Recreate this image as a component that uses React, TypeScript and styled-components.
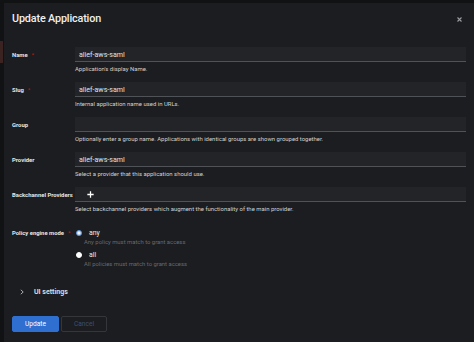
import React from "react";
import styled, { createGlobalStyle } from "styled-components";

const Global = createGlobalStyle`
  html, body { margin: 0; padding: 0; background: #101113; }
  body { font-family: Roboto, "Open Sans", "Noto Sans", sans-serif; -webkit-font-smoothing: antialiased; }
  * { box-sizing: border-box; }
`;

const Page = styled.div`
  width: 474px;
  height: 342px;
  display: flex;
  padding-top: 3px;
  overflow: hidden;
  background: #111214;
`;

const SideStrip = styled.div`
  width: 4px;
  flex: none;
  display: flex;
  flex-direction: column;
  padding-top: 38px;
`;

const NavAccent = styled.div`
  width: 3px;
  height: 22px;
  background: #3a2320;
`;

const Modal = styled.div`
  flex: 1;
  background: #1b1d21;
  padding: 9px 8px 0 8px;
  display: flex;
  flex-direction: column;
`;

const Header = styled.div`
  display: flex;
  align-items: center;
  justify-content: space-between;
  height: 14px;
  margin-bottom: 21px;
`;

const Title = styled.h1`
  margin: 0;
  font-size: 10.8px;
  line-height: 14px;
  font-weight: 500;
  color: #f0f0f0;
  letter-spacing: -0.15px;
`;

const Close = styled.button`
  border: none;
  background: none;
  padding: 0;
  margin-right: 3px;
  width: 8px;
  height: 8px;
  display: flex;
  align-items: center;
  justify-content: center;
`;

const Form = styled.div`
  display: flex;
  flex-direction: column;
  gap: 9px;
`;

const Row = styled.div<{ $padTop?: number }>`
  display: grid;
  grid-template-columns: 63px 1fr;
  align-items: start;
  padding-top: ${(p) => p.$padTop ?? 0}px;
`;

const Label = styled.div<{ $h?: number }>`
  height: ${(p) => p.$h ?? 15}px;
  display: flex;
  align-items: center;
  font-size: 5.9px;
  font-weight: 700;
  color: #e6e6e6;
  white-space: nowrap;
`;

const Req = styled.span`
  color: #c9190b;
  margin-left: 4px;
  font-weight: 400;
`;

const Field = styled.div`
  display: flex;
  flex-direction: column;
`;

const Input = styled.div`
  height: 15px;
  background: #222428;
  border-bottom: 1px solid #4f5257;
  display: flex;
  align-items: center;
  padding-left: 4px;
  font-size: 7.1px;
  color: #e2e2e2;
`;

const Helper = styled.div`
  margin-top: 2px;
  height: 9px;
  line-height: 9px;
  font-size: 5.95px;
  color: #d2d2d2;
  white-space: nowrap;
`;

const PlusBtn = styled.span`
  display: flex;
  align-items: center;
  margin-left: 8px;
`;

const Radios = styled.div`
  display: flex;
  flex-direction: column;
  gap: 3px;
  padding-left: 1px;
`;

const RadioLine = styled.div`
  height: 10px;
  display: flex;
  align-items: center;
  gap: 7px;
  font-size: 6.9px;
  color: #ededed;
`;

const RadioDot = styled.span<{ $on?: boolean }>`
  width: 6px;
  height: 6px;
  border-radius: 50%;
  background: #ffffff;
  border: ${(p) => (p.$on ? "1.6px solid #5c93d8" : "1px solid #ffffff")};
  box-shadow: ${(p) => (p.$on ? "inset 0 0 0 1px #c8d8ef" : "none")};
  flex: none;
`;

const RadioHelp = styled.div`
  padding-left: 8px;
  height: 9px;
  line-height: 9px;
  font-size: 5.9px;
  color: #666a6f;
  white-space: nowrap;
`;

const Expand = styled.div`
  margin-top: 18px;
  padding-left: 8px;
  display: flex;
  align-items: center;
  gap: 10px;
  height: 10px;
  font-size: 7px;
  font-weight: 600;
  color: #e3e3e3;
`;

const Actions = styled.div`
  margin-top: 19px;
  display: flex;
  gap: 2px;
`;

const Btn = styled.button<{ $primary?: boolean }>`
  height: 16px;
  padding: 0;
  width: ${(p) => (p.$primary ? 47 : 46)}px;
  border-radius: 2px;
  font-family: inherit;
  font-size: 6.6px;
  border: 1px solid ${(p) => (p.$primary ? "#2f6fd0" : "#33363b")};
  background: ${(p) => (p.$primary ? "#2f6fd0" : "transparent")};
  color: ${(p) => (p.$primary ? "#ffffff" : "#41506a")};
`;

const fields = [
  { label: "Name", req: true, value: "alief-aws-saml", help: "Application's display Name." },
  { label: "Slug", req: true, value: "alief-aws-saml", help: "Internal application name used in URLs." },
  {
    label: "Group",
    req: false,
    value: "",
    help: "Optionally enter a group name. Applications with identical groups are shown grouped together.",
  },
  { label: "Provider", req: false, value: "alief-aws-saml", help: "Select a provider that this application should use." },
];

export default function App() {
  return (
    <>
      <Global />
      <Page>
        <SideStrip>
          <NavAccent />
        </SideStrip>
        <Modal>
          <Header>
            <Title>Update Application</Title>
            <Close aria-label="Close">
              <svg width="5" height="5" viewBox="0 0 10 10">
                <path d="M1 1 L9 9 M9 1 L1 9" stroke="#9a9ca0" strokeWidth="2.2" />
              </svg>
            </Close>
          </Header>
          <Form>
            {fields.map((f) => (
              <Row key={f.label}>
                <Label>
                  {f.label}
                  {f.req && <Req>*</Req>}
                </Label>
                <Field>
                  <Input>{f.value}</Input>
                  <Helper>{f.help}</Helper>
                </Field>
              </Row>
            ))}
            <Row>
              <Label>Backchannel Providers</Label>
              <Field>
                <Input>
                  <PlusBtn>
                    <svg width="7" height="7" viewBox="0 0 10 10">
                      <path d="M5 0.5 V9.5 M0.5 5 H9.5" stroke="#ffffff" strokeWidth="1.8" />
                    </svg>
                  </PlusBtn>
                </Input>
                <Helper>Select backchannel providers which augment the functionality of the main provider.</Helper>
              </Field>
            </Row>
            <Row $padTop={6}>
              <Label $h={10}>
                Policy engine mode<Req>*</Req>
              </Label>
              <Radios>
                <div>
                  <RadioLine>
                    <RadioDot $on />
                    any
                  </RadioLine>
                  <RadioHelp>Any policy must match to grant access</RadioHelp>
                </div>
                <div>
                  <RadioLine>
                    <RadioDot />
                    all
                  </RadioLine>
                  <RadioHelp>All policies must match to grant access</RadioHelp>
                </div>
              </Radios>
            </Row>
          </Form>
          <Expand>
            <svg width="4" height="6" viewBox="0 0 4 6">
              <path d="M0.8 0.8 L3.2 3 L0.8 5.2" stroke="#bdbdbd" strokeWidth="0.9" fill="none" />
            </svg>
            UI settings
          </Expand>
          <Actions>
            <Btn $primary>Update</Btn>
            <Btn>Cancel</Btn>
          </Actions>
        </Modal>
      </Page>
    </>
  );
}
